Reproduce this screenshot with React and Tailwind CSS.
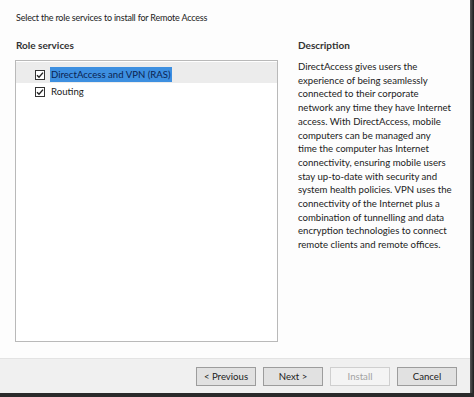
import React from "react";

const DESCRIPTION = [
  "DirectAccess gives users the",
  "experience of being seamlessly",
  "connected to their corporate",
  "network any time they have Internet",
  "access. With DirectAccess, mobile",
  "computers can be managed any",
  "time the computer has Internet",
  "connectivity, ensuring mobile users",
  "stay up-to-date with security and",
  "system health policies. VPN uses the",
  "connectivity of the Internet plus a",
  "combination of tunnelling and data",
  "encryption technologies to connect",
  "remote clients and remote offices.",
];

const CheckBox = () => (
  <span className="flex h-[10px] w-[10px] shrink-0 items-center justify-center border border-[#333] bg-white">
    <svg width="8" height="8" viewBox="0 0 8 8">
      <path d="M1 4.2 L3 6.2 L7 1.6" fill="none" stroke="#222" strokeWidth="1.4" />
    </svg>
  </span>
);

const Btn = ({ children, disabled }) => (
  <button
    className={
      disabled
        ? "flex h-[19px] w-[60px] items-center justify-center border border-[#cfcfcf] bg-[#f4f4f4] text-[#a3a3a3]"
        : "flex h-[19px] w-[60px] items-center justify-center border border-[#9c9c9c] bg-[#e1e1e1] text-[#222]"
    }
  >
    {children}
  </button>
);

export default function App() {
  return (
    <div
      className="flex h-[397px] w-[474px] flex-col bg-[#2a2a2a] text-[9.6px] leading-[14px] text-[#222]"
      style={{ fontFamily: "Lato, 'Liberation Sans', sans-serif" }}
    >
      <div className="flex h-[393px]">
        <div className="flex w-[470px] flex-col bg-[#fdfdfd]">
          <div className="flex-1 pl-[16px] pt-[11px]">
            <div className="text-[9px] tracking-[-0.2px]">Select the role services to install for Remote Access</div>

            <div className="mt-[13px] flex">
              <div className="w-[262px] shrink-0">
                <div className="text-[10px] font-bold text-[#333]">Role services</div>
                <div className="mt-[8px] ml-[-1px] h-[282px] border border-[#b9b9b9] bg-white pt-[1px]">
                  <div className="flex h-[21px] items-end bg-[#ececec] pb-[1px] pl-[19px]">
                    <div className="mb-[2px]">
                      <CheckBox />
                    </div>
                    <span className="ml-[5px] flex h-[15px] items-center bg-[#3d8fe0] px-[1px] text-[#0b2350]">
                      DirectAccess and VPN (RAS)
                    </span>
                  </div>
                  <div className="flex h-[18px] items-center pl-[19px]">
                    <CheckBox />
                    <span className="ml-[6px]">Routing</span>
                  </div>
                </div>
              </div>

              <div className="ml-[20px]">
                <div className="text-[10px] font-bold text-[#333]">Description</div>
                <div className="mt-[8px] leading-[13.7px]">
                  {DESCRIPTION.map((line) => (
                    <div key={line} className="whitespace-nowrap">
                      {line}
                    </div>
                  ))}
                </div>
              </div>
            </div>
          </div>

          <div className="flex h-[35px] justify-end gap-[7px] border-t border-[#e3e3e3] bg-[#f0f0f0] pr-[13px] pt-[8px]">
            <Btn>&lt; Previous</Btn>
            <Btn>Next &gt;</Btn>
            <Btn disabled>Install</Btn>
            <Btn>Cancel</Btn>
          </div>
        </div>
        <div className="w-[4px] bg-gradient-to-r from-[#5a5a5a] to-[#1c1c1c]" />
      </div>
    </div>
  );
}
